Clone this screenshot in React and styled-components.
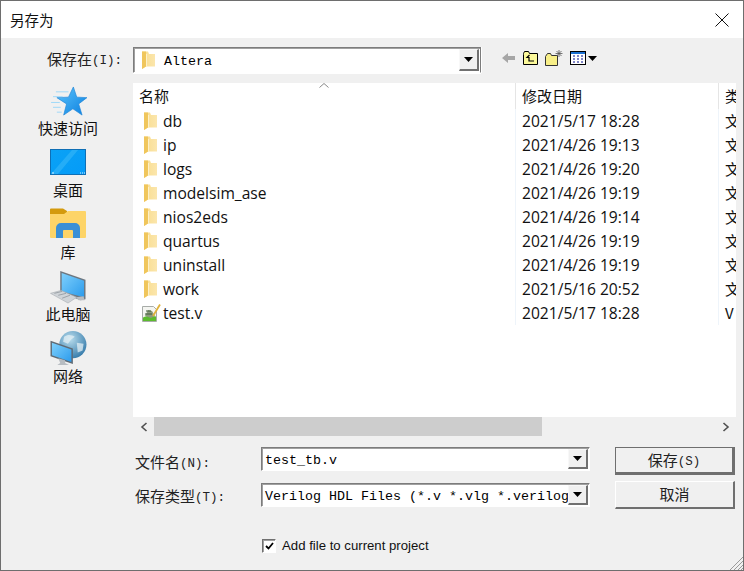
import React from 'react';
import styled, { createGlobalStyle } from 'styled-components';

const GlobalStyle = createGlobalStyle`
  html, body { margin: 0; padding: 0; background: #f0f0f0; }
  * { box-sizing: border-box; }
`;

const cjk = `"Noto Sans CJK SC", sans-serif`;
const mono = `"Liberation Mono", "Noto Sans CJK SC", monospace`;

const folders = [
  ['db', '2021/5/17 18:28', '文'],
  ['ip', '2021/4/26 19:13', '文'],
  ['logs', '2021/4/26 19:20', '文'],
  ['modelsim_ase', '2021/4/26 19:19', '文'],
  ['nios2eds', '2021/4/26 19:14', '文'],
  ['quartus', '2021/4/26 19:19', '文'],
  ['uninstall', '2021/4/26 19:19', '文'],
  ['work', '2021/5/16 20:52', '文'],
];

const FolderIcon = () => (
  <svg width="13" height="18" viewBox="0 0 13 18">
    <defs>
      <linearGradient id="fold" x1="0" x2="1" y1="0" y2="0">
        <stop offset="0" stopColor="#f9dc8c" />
        <stop offset="1" stopColor="#fbe6ad" />
      </linearGradient>
    </defs>
    <path d="M0 .5h6l1 2.5h6v12.5H4L0 18z" fill="url(#fold)" />
    <path d="M0 .5h4v15L0 18z" fill="#f0c65c" />
    <path d="M4.5 3v12.5" stroke="#fdf0c8" strokeWidth="1" />
  </svg>
);

const SmallDown = () => (
  <svg width="9" height="5" viewBox="0 0 9 5"><path d="M0 0h9L4.5 5z" fill="#000" /></svg>
);

const StarIcon = () => (
  <svg width="37" height="31" viewBox="0 0 38 32">
    <defs>
      <linearGradient id="star" x1="0" x2="1" y1="0" y2="1">
        <stop offset="0" stopColor="#5cc4fb" />
        <stop offset="1" stopColor="#0a7fe0" />
      </linearGradient>
    </defs>
    <path d="M24 1l3.5 10.5L38 12l-8.5 6.5L33 30l-9.5-6.5L14 30l3-11.5L7 12l12-.5z" fill="url(#star)" stroke="#1f86d8" strokeWidth=".7" />
    <path d="M6 6h13M3 11h10M1 17h9M3 22h8M7 27h5" stroke="#9ed8f8" strokeWidth="1" />
  </svg>
);

const DesktopIcon = () => (
  <svg width="36" height="26" viewBox="0 0 36 26">
    <defs>
      <linearGradient id="desk" x1="0" x2="1" y1="0" y2="1">
        <stop offset="0" stopColor="#0ba2f5" />
        <stop offset="1" stopColor="#049bf8" />
      </linearGradient>
    </defs>
    <rect x=".5" y=".5" width="35" height="25" fill="url(#desk)" stroke="#0f6fb5" />
    <path d="M1 25L22 1h6L8 25z" fill="#30b4f8" opacity=".7" />
    <path d="M2 24h2M30 24h1M32 24h1M34 24h1" stroke="#d6f0ff" />
  </svg>
);

const LibraryIcon = () => (
  <svg width="36" height="30" viewBox="0 0 36 30">
    <path d="M0 1.5a1 1 0 0 1 1-1h12l4 2.5v5H0z" fill="#d49a0d" />
    <path d="M0 6h14l4-3h17a1 1 0 0 1 1 1v25a1 1 0 0 1-1 1H1a1 1 0 0 1-1-1z" fill="#fdd468" />
    <path d="M6 30V20a5 5 0 0 1 5-5h14a5 5 0 0 1 5 5v10h-7v-7a1 1 0 0 0-1-1H14a1 1 0 0 0-1 1v7z" fill="#3a8fd6" />
  </svg>
);

const ComputerIcon = () => (
  <svg width="38" height="35" viewBox="0 0 38 36">
    <defs>
      <linearGradient id="pc" x1="0" x2="1" y1="0" y2="1">
        <stop offset="0" stopColor="#7fd0fc" />
        <stop offset="1" stopColor="#2b9bec" />
      </linearGradient>
    </defs>
    <path d="M11 1l26 9v20l-5 1-21-8z" fill="#6d7780" />
    <path d="M12.5 3l23 8v17l-23-6z" fill="url(#pc)" />
    <path d="M27 28l3 3h6l-1-4z" fill="#b8bdc2" />
    <path d="M1 24l11-3 16 7-9 6z" fill="#d0d4d8" stroke="#a4a9ae" strokeWidth=".6" />
    <path d="M5 24l8-2M9 26l8-2M13 29l8-3" stroke="#8e949a" strokeWidth=".8" />
  </svg>
);

const NetworkIcon = () => (
  <svg width="38" height="35" viewBox="0 0 38 36">
    <defs>
      <radialGradient id="globe" cx=".4" cy=".3" r=".8">
        <stop offset="0" stopColor="#b9dded" />
        <stop offset="1" stopColor="#2a72a4" />
      </radialGradient>
      <linearGradient id="net" x1="0" x2="1" y1="0" y2="1">
        <stop offset="0" stopColor="#7fd0fc" />
        <stop offset="1" stopColor="#2b9bec" />
      </linearGradient>
    </defs>
    <circle cx="24" cy="14" r="14" fill="url(#globe)" />
    <path d="M15 6c4-3 8-2 11 0l-4 3-3 4-5-2zM28 12l7 1-1 7-5 2z" fill="#e3eff4" opacity=".75" />
    <path d="M1 10l23 8v16l-23-8z" fill="#5f6a74" />
    <path d="M2.5 12l20 7v13L2.5 25z" fill="url(#net)" />
    <path d="M9 28l7 2v3l4 2H8l3-2z" fill="#b8bdc2" />
  </svg>
);

const VerilogIcon = () => (
  <svg width="20" height="20" viewBox="0 0 20 20">
    <path d="M1.5 3.5h11l3 3v12h-14z" fill="#f4f5f1" stroke="#a8aca8" />
    <path d="M2 14.5c4-2 8-2 13-1V18H2z" fill="#5cbb2e" />
    <path d="M4 13l3-6 4 1 3 5-4 2z" fill="#8d9a7e" />
    <path d="M5 8h5M4 11h7" stroke="#3f5c39" strokeWidth="1" />
    <path d="M12 13L19 1.5" stroke="#e0b23c" strokeWidth="1.8" />
  </svg>
);

const App = () => (
  <Window>
    <GlobalStyle />
    <TitleBar>
      <Title>另存为</Title>
      <CloseIcon viewBox="0 0 14 14"><path d="M.5.5l13 13M13.5.5l-13 13" stroke="#111" strokeWidth="1" fill="none" /></CloseIcon>
    </TitleBar>

    <Body>
      <LookRow>
        <LookLabel>保存在<Latin>(I):</Latin></LookLabel>
        <LookCombo>
          <FolderIcon />
          <ComboText>Altera</ComboText>
          <ComboButton><SmallDown /></ComboButton>
        </LookCombo>
        <Toolbar>
          <svg width="14" height="12" viewBox="0 0 14 12"><path d="M0 6l6-5v3h7v4H6v3z" fill="#a6a6a6" /></svg>
          <svg width="15" height="14" viewBox="0 0 15 14"><path d="M.5 3.5v10h14v-11h-8l-1-2h-4l-1 2z" fill="#fbf89a" stroke="#000" /><path d="M6.5 4L4 6.5h2v3.5h5" fill="none" stroke="#000" strokeWidth="1.2" /></svg>
          <svg width="18" height="16" viewBox="0 0 18 16"><path d="M.5 6.5v9h12v-10h-6l-1-2h-3z" fill="#f8ef88" stroke="#333" /><path d="M14 0v7M10.5 3.5h7M11.5 1l5 5M16.5 1l-5 5" stroke="#555" strokeWidth=".8" /></svg>
          <ViewButton>
            <svg width="16" height="14" viewBox="0 0 16 14"><rect x=".5" y=".5" width="15" height="13" fill="#fff" stroke="#000" /><rect x="1" y="1" width="14" height="2" fill="#1b6fd0" /><path d="M3 5h2M7 5h2M11 5h2M3 8h2M7 8h2M11 8h2M3 11h2M7 11h2M11 11h2" stroke="#000a8c" /></svg>
            <SmallDown />
          </ViewButton>
        </Toolbar>
      </LookRow>

      <Middle>
        <Sidebar>
          <Place><PlaceIcon $top={3}><StarIcon /></PlaceIcon><span>快速访问</span></Place>
          <Place><PlaceIcon $top={4}><DesktopIcon /></PlaceIcon><span>桌面</span></Place>
          <Place><PlaceIcon $top={1}><LibraryIcon /></PlaceIcon><span>库</span></Place>
          <Place><PlaceIcon $top={1}><ComputerIcon /></PlaceIcon><span>此电脑</span></Place>
          <Place><PlaceIcon $top={0}><NetworkIcon /></PlaceIcon><span>网络</span></Place>
        </Sidebar>

        <ListPane>
          <ListArea>
            <HeaderRow>
              <NameHead>名称<SortArrow viewBox="0 0 10 5"><path d="M.5 4.5L5 .5l4.5 4" fill="none" stroke="#888" /></SortArrow></NameHead>
              <DateHead>修改日期</DateHead>
              <TypeHead>类</TypeHead>
            </HeaderRow>
            {folders.map(([name, date, type]) => (
              <FileRow key={name}>
                <NameCell><IconSlot><FolderIcon /></IconSlot>{name}</NameCell>
                <DateCell>{date}</DateCell>
                <TypeCell>{type}</TypeCell>
              </FileRow>
            ))}
            <FileRow>
              <NameCell><IconSlot $file><VerilogIcon /></IconSlot>test.v</NameCell>
              <DateCell>2021/5/17 18:28</DateCell>
              <TypeCell>V</TypeCell>
            </FileRow>
          </ListArea>
          <HScroll>
            <ScrollEnd>
              <svg width="8" height="10" viewBox="0 0 8 10"><path d="M6.5 1L2 5l4.5 4" fill="none" stroke="#505050" strokeWidth="1.6" /></svg>
            </ScrollEnd>
            <ScrollThumb />
            <ScrollTrack />
            <ScrollEnd>
              <svg width="8" height="10" viewBox="0 0 8 10"><path d="M1.5 1L6 5 1.5 9" fill="none" stroke="#505050" strokeWidth="1.6" /></svg>
            </ScrollEnd>
          </HScroll>
        </ListPane>
      </Middle>

      <FormGrid>
        <FormLabel>文件名<Latin>(N):</Latin></FormLabel>
        <FormCombo>
          <ComboInput>test_tb.v</ComboInput>
          <ComboButton><SmallDown /></ComboButton>
        </FormCombo>
        <PushButton $primary>保存<Latin>(S)</Latin></PushButton>
        <FormLabel>保存类型<Latin>(T):</Latin></FormLabel>
        <FormCombo $second>
          <ComboInput>Verilog HDL Files (*.v *.vlg *.verilog</ComboInput>
          <ComboButton><SmallDown /></ComboButton>
        </FormCombo>
        <PushButton>取消</PushButton>
      </FormGrid>

      <CheckRow>
        <CheckBox>
          <svg width="9" height="8" viewBox="0 0 9 8"><path d="M1 4l2.5 2.5L8 1" fill="none" stroke="#000" strokeWidth="1.8" /></svg>
        </CheckBox>
        <CheckLabel>Add file to current project</CheckLabel>
      </CheckRow>
    </Body>

    <Grip viewBox="0 0 14 14">
      <path d="M14 1L1 14M14 5L5 14M14 9L9 14M14 12l-2 2" stroke="#9a9a9a" strokeWidth="1" />
    </Grip>
  </Window>
);

const Window = styled.div`
  position: relative;
  width: 744px;
  height: 571px;
  background: #f0f0f0;
  border: 1px solid #6e6e6e;
  display: flex;
  flex-direction: column;
  overflow: hidden;
`;

const TitleBar = styled.div`
  height: 37px;
  flex: none;
  background: #fff;
  display: flex;
  align-items: center;
  justify-content: space-between;
  padding: 0 14px 0 9px;
`;

const Title = styled.div`
  font: 14.5px ${cjk};
  color: #111;
`;

const CloseIcon = styled.svg`
  width: 14px;
  height: 14px;
`;

const Body = styled.div`
  flex: 1;
  display: flex;
  flex-direction: column;
`;

const LookRow = styled.div`
  display: flex;
  align-items: flex-start;
  padding-top: 9px;
  height: 45px;
  flex: none;
`;

const Latin = styled.span`
  font-family: "Liberation Mono", monospace;
  font-size: 12.5px;
  vertical-align: 1px;
`;

const LookLabel = styled.div`
  width: 132px;
  padding-left: 46px;
  font: 15px/23px ${cjk};
  color: #222;
`;

const LookCombo = styled.div`
  width: 348px;
  height: 26px;
  background: #fff;
  border-style: solid;
  border-width: 1px;
  border-color: #7c7c7c #7c7c7c #fff #7c7c7c;
  box-shadow: inset 1px 1px 0 #a0a0a0, 0 1px 0 #fff, 1px 0 0 #fff;
  display: flex;
  align-items: center;
  padding: 1px 1px 1px 8px;
`;

const ComboText = styled.span`
  font: 13.33px ${mono};
  color: #000;
  margin-left: 9px;
  padding-top: 2px;
  flex: 1;
`;

const ComboButton = styled.div`
  width: 20px;
  height: 100%;
  flex: none;
  background: #f0f0f0;
  border-style: solid;
  border-width: 1px 2px 2px 1px;
  border-color: #f8f8f8 #707070 #707070 #f8f8f8;
  display: flex;
  align-items: center;
  justify-content: center;
`;

const Toolbar = styled.div`
  display: flex;
  align-items: center;
  margin-left: 21px;
  gap: 7px;
  height: 22px;
`;

const ViewButton = styled.div`
  display: flex;
  align-items: center;
  gap: 2px;
`;

const Middle = styled.div`
  display: flex;
  flex: none;
  height: 353px;
`;

const Sidebar = styled.div`
  width: 132px;
  flex: none;
  display: flex;
  flex-direction: column;
`;

const Place = styled.div`
  width: 134px;
  height: 62px;
  display: flex;
  flex-direction: column;
  align-items: center;
  font: 15px/18px ${cjk};
  color: #111;
`;

const PlaceIcon = styled.div`
  height: 36px;
  padding-top: ${(p) => p.$top}px;
  display: flex;
  align-items: flex-start;
  justify-content: center;
`;

const ListPane = styled.div`
  width: 603px;
  flex: none;
  display: flex;
  flex-direction: column;
`;

const ListArea = styled.div`
  height: 334px;
  background: #fff;
  overflow: hidden;
`;

const columns = `
  display: grid;
  grid-template-columns: 382px 203px 18px;
`;

const HeaderRow = styled.div`
  ${columns}
  height: 26px;
  font: 15px/26px ${cjk};
  color: #111;
`;

const HeadCell = styled.div`
  padding-left: 6px;
  overflow: hidden;
  white-space: nowrap;
`;

const NameHead = styled(HeadCell)`
  position: relative;
`;

const SortArrow = styled.svg`
  position: absolute;
  left: 186px;
  top: 0;
  width: 10px;
  height: 5px;
`;

const DateHead = styled(HeadCell)`
  border-left: 1px solid #e5e5e5;
`;

const TypeHead = styled(HeadCell)`
  border-left: 1px solid #e5e5e5;
`;

const FileRow = styled.div`
  ${columns}
  height: 24px;
  font: 15.6px/24px "Open Sans", sans-serif;
  color: #111;
`;

const NameCell = styled.div`
  display: flex;
  align-items: center;
`;

const IconSlot = styled.div`
  width: 30px;
  padding-left: ${(p) => (p.$file ? '8px' : '11px')};
  display: flex;
  align-items: center;
  flex: none;
`;

const DateCell = styled.div`
  padding-left: 6px;
  border-left: 1px solid #eef4fa;
`;

const TypeCell = styled.div`
  padding-left: 6px;
  border-left: 1px solid #eef4fa;
  font: 15px/24px ${cjk};
  overflow: hidden;
`;

const HScroll = styled.div`
  height: 19px;
  display: flex;
  background: #f0f0f0;
`;

const ScrollEnd = styled.div`
  width: 21px;
  flex: none;
  display: flex;
  align-items: center;
  justify-content: center;
`;

const ScrollThumb = styled.div`
  width: 388px;
  background: #cdcdcd;
`;

const ScrollTrack = styled.div`
  flex: 1;
`;

const FormGrid = styled.div`
  display: grid;
  grid-template-columns: 126px 329px 145px;
  grid-auto-rows: 28px;
  row-gap: 6px;
  padding: 11px 0 0 134px;
  align-items: center;
  flex: none;
`;

const FormLabel = styled.div`
  font: 15px/24px ${cjk};
  color: #222;
  padding-top: 4px;
`;

const FormCombo = styled.div`
  width: 329px;
  height: 24px;
  align-self: start;
  margin-top: ${(p) => (p.$second ? '2px' : '0')};
  background: #fff;
  border-style: solid;
  border-width: 1px;
  border-color: #7c7c7c #fff #fff #7c7c7c;
  box-shadow: inset 1px 1px 0 #a0a0a0;
  display: flex;
  align-items: center;
  padding: 1px;
`;

const ComboInput = styled.span`
  flex: 1;
  padding: 2px 0 0 2px;
  font: 13.33px ${mono};
  color: #000;
  white-space: nowrap;
  overflow: hidden;
`;

const PushButton = styled.div`
  width: 120px;
  height: 28px;
  margin-left: 25px;
  background: #f0f0f0;
  border-style: solid;
  border-width: ${(p) => (p.$primary ? '1px 3px 3px 1px' : '1px 2px 2px 1px')};
  border-color: #fff #6f6f6f #6f6f6f #fff;
  outline: 1px solid ${(p) => (p.$primary ? '#6f6f6f' : 'transparent')};
  outline-offset: -1px;
  text-align: center;
  font: 15px/24px ${cjk};
  color: #222;
`;

const CheckRow = styled.div`
  display: flex;
  align-items: center;
  gap: 6px;
  padding: 29px 0 0 261px;
`;

const CheckBox = styled.div`
  width: 14px;
  height: 14px;
  background: #fff;
  border-style: solid;
  border-width: 1px;
  border-color: #707070 #fff #fff #707070;
  box-shadow: inset 1px 1px 0 #a0a0a0;
  display: flex;
  align-items: center;
  justify-content: center;
`;

const CheckLabel = styled.span`
  font: 13.2px "Liberation Sans", sans-serif;
  color: #111;
`;

const Grip = styled.svg`
  position: absolute;
  right: 0;
  bottom: 0;
  width: 14px;
  height: 14px;
`;

export default App;
